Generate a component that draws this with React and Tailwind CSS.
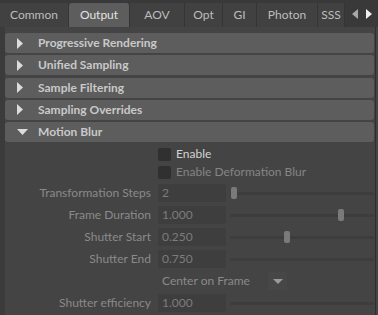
const tabs = [
  { name: 'Common', w: 'w-[69px]' },
  { name: 'Output', w: 'w-[61px]', active: true },
  { name: 'AOV', w: 'w-[55px]' },
  { name: 'Opt', w: 'w-[38px]' },
  { name: 'GI', w: 'w-[34px]' },
  { name: 'Photon', w: 'w-[61px]' },
  { name: 'SSS', w: 'w-[27px]' },
];

const sections = ['Progressive Rendering', 'Unified Sampling', 'Sample Filtering', 'Sampling Overrides'];

const Header = ({ title, open = false }) => (
  <div className="h-[20px] rounded-[3px] bg-[#5d5d5d] flex items-center">
    <div className="w-[33px] flex justify-center pl-[2px]">
      {open ? (
        <svg width="11" height="6" viewBox="0 0 11 6"><path d="M0 0H11L5.5 6Z" fill="#dcdcdc" /></svg>
      ) : (
        <svg width="6" height="11" viewBox="0 0 6 11" className="-ml-[6px]"><path d="M0 0L6 5.5L0 11Z" fill="#dcdcdc" /></svg>
      )}
    </div>
    <span className="text-[12px] font-bold text-[#c9c9c9] leading-none">{title}</span>
  </div>
);

const Slider = ({ pos }) => (
  <div className="relative flex-1 h-[12px] flex items-center">
    <div className="w-full h-[3px] bg-[#3d3d3d]" />
    {pos !== undefined && (
      <div className="absolute top-0 w-[6px] h-[12px] rounded-[2px] bg-[#7a7a7a]" style={{ left: pos }} />
    )}
  </div>
);

const Row = ({ label, value, pos }) => (
  <div className="h-[22px] flex items-center">
    <div className="w-[146px] text-right text-[#8a8a8a]">{label}</div>
    <div className="ml-[7px] w-[68px] h-[18px] rounded-[2px] bg-[#3e3e3e] text-[#7c7c7c] px-[4px] flex items-center">{value}</div>
    <div className="ml-[4px] flex-1 flex">
      <Slider pos={pos} />
    </div>
  </div>
);

export default function App() {
  return (
    <div
      className="w-[378px] h-[315px] overflow-hidden bg-[#444444] text-[12px] flex flex-col"
      style={{ fontFamily: 'Lato, "Liberation Sans", sans-serif' }}
    >
      <div className="h-[27px] bg-[#393939] flex items-end shrink-0">
        {tabs.map((t) => (
          <div
            key={t.name}
            className={`${t.w} h-[24px] flex items-center justify-center overflow-hidden whitespace-nowrap border-r border-[#353535] ${
              t.active ? 'bg-[#5d5d5d] text-[#e2e2e2] rounded-t-[3px]' : 'bg-[#414141] text-[#bdbdbd]'
            }`}
          >
            {t.name}
          </div>
        ))}
        <div className="flex-1 h-[27px] flex items-center justify-center gap-[8px] bg-[#393939]">
          <svg width="6" height="10" viewBox="0 0 6 10"><path d="M6 0V10L0 5Z" fill="#a8a8a8" /></svg>
          <svg width="6" height="10" viewBox="0 0 6 10"><path d="M0 0V10L6 5Z" fill="#f0f0f0" /></svg>
        </div>
      </div>
      <div className="flex-1 flex">
        <div className="w-[5px] bg-[#3b3b3b]" />
        <div className="flex-1 pt-[6px] pr-[1px]">
          <div className="flex flex-col gap-[2.25px]">
            {sections.map((s) => (
              <Header key={s} title={s} />
            ))}
            <Header title="Motion Blur" open />
          </div>
          <div className="pt-[3px]">
            <div className="h-[18px] flex items-center pl-[153px]">
              <div className="w-[13px] h-[13px] rounded-[2px] bg-[#303030]" />
              <span className="ml-[5px] text-[#d2d2d2]">Enable</span>
            </div>
            <div className="h-[18px] flex items-center pl-[153px]">
              <div className="w-[13px] h-[13px] rounded-[2px] bg-[#303030]" />
              <span className="ml-[5px] text-[#858585]">Enable Deformation Blur</span>
            </div>
            <div className="h-[1px]" />
            <Row label="Transformation Steps" value="2" pos={1} />
            <Row label="Frame Duration" value="1.000" pos={108} />
            <Row label="Shutter Start" value="0.250" pos={54} />
            <Row label="Shutter End" value="0.750" />
            <div className="h-[22px] flex items-center pl-[153px]">
              <div className="w-[106px] pl-[4px] text-[#8a8a8a]">Center on Frame</div>
              <div className="ml-[4px] w-[19px] h-[18px] flex items-center justify-center bg-[#474747]">
                <svg width="10" height="5" viewBox="0 0 10 5"><path d="M0 0H10L5 5Z" fill="#9a9a9a" /></svg>
              </div>
            </div>
            <Row label="Shutter efficiency" value="1.000" />
          </div>
        </div>
        <div className="w-[3px] bg-[#444444] border-l border-[#2e2e2e]" />
      </div>
    </div>
  );
}
